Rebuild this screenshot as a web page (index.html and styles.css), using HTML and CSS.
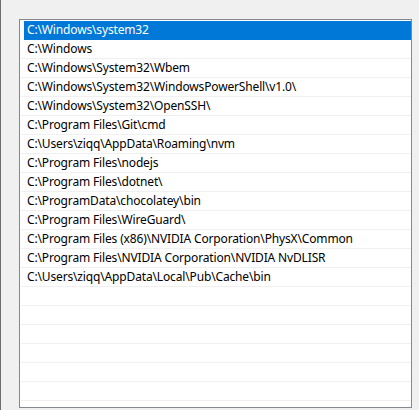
FILE: index.html
```html
<!DOCTYPE html>
<html>
<head>
  <title>Edit environment variable</title>
  <link rel="stylesheet" href="styles.css">
</head>
<body>
  <div class="edge"></div>
  <div class="listbox">
    <div class="row selected">C:\Windows\system32</div>
    <div class="row">C:\Windows</div>
    <div class="row">C:\Windows\System32\Wbem</div>
    <div class="row">C:\Windows\System32\WindowsPowerShell\v1.0\</div>
    <div class="row">C:\Windows\System32\OpenSSH\</div>
    <div class="row">C:\Program Files\Git\cmd</div>
    <div class="row">C:\Users\ziqq\AppData\Roaming\nvm</div>
    <div class="row">C:\Program Files\nodejs</div>
    <div class="row">C:\Program Files\dotnet\</div>
    <div class="row">C:\ProgramData\chocolatey\bin</div>
    <div class="row">C:\Program Files\WireGuard\</div>
    <div class="row">C:\Program Files (x86)\NVIDIA Corporation\PhysX\Common</div>
    <div class="row">C:\Program Files\NVIDIA Corporation\NVIDIA NvDLISR</div>
    <div class="row">C:\Users\ziqq\AppData\Local\Pub\Cache\bin</div>
    <div class="row"></div>
    <div class="row"></div>
    <div class="row"></div>
    <div class="row"></div>
    <div class="row"></div>
    <div class="row"></div>
    <div class="row"></div>
  </div>
</body>
</html>
```

FILE: styles.css
```css
body {
  margin: 0;
  background-color: #f0f0f0;
  font-family: "Noto Sans", sans-serif;
  font-size: 12px;
  letter-spacing: -0.15px;
  display: flex;
  height: 410px;
  overflow: hidden;
}

.edge {
  width: 1px;
  background-color: #6e6e6e;
}

.listbox {
  margin-left: 18px;
  margin-top: 19px;
  width: 390px;
  height: 386px;
  border: 1px solid #828790;
  background-color: #fff;
  padding: 1px 0 0 1px;
  box-sizing: content-box;
  overflow: hidden;
}

.row {
  height: 18px;
  line-height: 18px;
  border-bottom: 1px solid #f0f0f0;
  padding-left: 6px;
  color: #000;
  white-space: nowrap;
}

.selected {
  margin-left: 3px;
  padding-left: 3px;
  background-color: #0078d7;
  border-bottom-color: #0078d7;
  color: #fff;
}
```
